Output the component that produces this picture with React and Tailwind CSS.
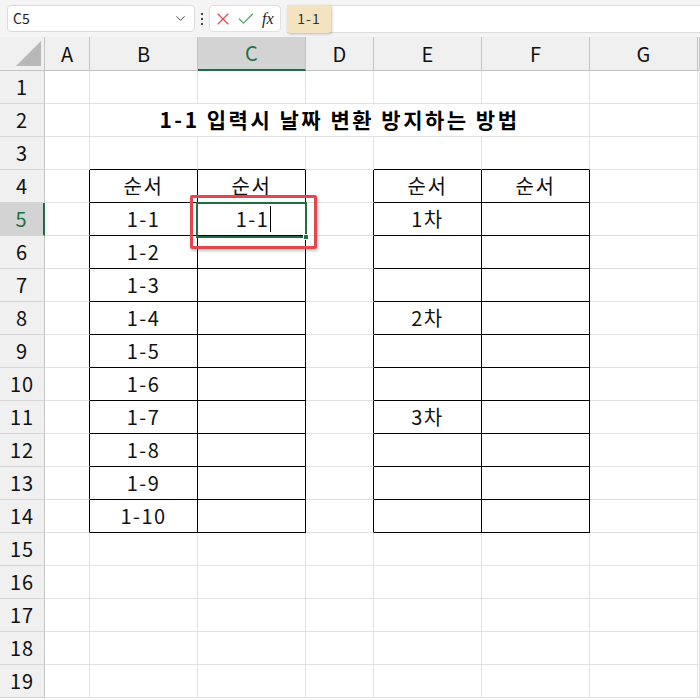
import { X, Check, ChevronDown } from 'lucide-react'

const COLS = ['A', 'B', 'C', 'D', 'E', 'F', 'G', 'H']
const ROWS = Array.from({ length: 19 }, (_, i) => i + 1)

// cell contents keyed "C:row"
const DATA = {
  'B4': '순서', 'C4': '순서', 'E4': '순서', 'F4': '순서',
  'B5': '1-1', 'E5': '1차',
  'B6': '1-2', 'B7': '1-3', 'B8': '1-4', 'B9': '1-5', 'B10': '1-6',
  'B11': '1-7', 'B12': '1-8', 'B13': '1-9', 'B14': '1-10',
  'E8': '2차', 'E11': '3차',
}

const inTable = (c, r) => r >= 4 && r <= 14 && ['B', 'C', 'E', 'F'].includes(c)

function Cell({ c, r }) {
  const t = inTable(c, r)
  // right border black inside tables, and on the cell just left of a table
  const rightBlack = t || (r >= 4 && r <= 14 && (c === 'A' || c === 'D'))
  const bottomBlack = t || (r === 3 && ['B', 'C', 'E', 'F'].includes(c))
  const txt = DATA[c + r]
  return (
    <div
      className={
        'border-r border-b flex items-center justify-center text-[20px] tracking-[1.5px] text-[#111] ' +
        (rightBlack ? 'border-r-black ' : 'border-r-[#e2e2e2] ') +
        (bottomBlack ? 'border-b-black' : 'border-b-[#e2e2e2]')
      }
    >
      {c === 'C' && r === 5 ? (
        <span className="flex items-center pl-[4px]">
          1-1<span className="ml-[1px] w-px h-[26px] bg-black" />
        </span>
      ) : txt}
    </div>
  )
}

export default function App() {
  return (
    <div
      className="w-[700px] h-[700px] overflow-hidden bg-white"
      style={{ fontFamily: '"Noto Sans CJK KR", "Noto Sans", sans-serif' }}
    >
      {/* formula bar */}
      <div className="h-[37px] bg-[#f4f4f4] flex items-center">
        <div className="ml-[7px] w-[188px] h-[27px] bg-white border border-[#dadada] rounded-[4px] flex items-center justify-between pl-[5px] pr-[6px] text-[14px] text-[#222]">
          <span>C5</span>
          <ChevronDown size={15} strokeWidth={1.6} className="text-[#444]" />
        </div>
        <div className="w-[14px] flex flex-col items-center gap-[3px]">
          <span className="w-[2px] h-[2px] bg-[#444]" />
          <span className="w-[2px] h-[2px] bg-[#444]" />
          <span className="w-[2px] h-[2px] bg-[#444]" />
        </div>
        <div className="w-[72px] h-[27px] bg-white border border-[#e0e0e0] rounded-[4px] flex items-center pl-[3px] gap-[3px]">
          <X size={20} strokeWidth={1.4} className="text-[#e0484c]" />
          <Check size={20} strokeWidth={1.4} className="text-[#4ca25a]" />
          <span className="ml-[3px] text-[16px] italic text-[#222]" style={{ fontFamily: '"Liberation Serif", serif' }}>fx</span>
        </div>
        <div className="ml-[6px] flex-1 h-[28px] bg-white border-y border-[#dcdcdc] flex items-center">
          <div className="w-[44px] h-[28px] bg-[#f3e3c0] rounded-[3px] shadow-[1px_1px_3px_rgba(0,0,0,0.25)] flex items-center justify-center text-[14px] tracking-[1px] text-[#333]">
            1-1
          </div>
        </div>
      </div>

      {/* sheet */}
      <div className="relative grid grid-cols-[45px_45px_108px_108px_68px_108px_108px_108px_1fr] grid-rows-[34px_repeat(19,33px)]">
        {/* corner */}
        <div className="bg-[#f0f0f0] border-r border-b border-[#c4c4c4] relative">
          <div
            className="absolute right-[3px] bottom-[4px] w-[25px] h-[25px] bg-[#b8b8b8]"
            style={{ clipPath: 'polygon(100% 0, 100% 100%, 0 100%)' }}
          />
        </div>
        {COLS.map(c => (
          <div
            key={c}
            className={
              'flex items-center justify-center text-[20px] border-r ' +
              (c === 'C'
                ? 'bg-[#d3d3d3] text-[#1e6e43] border-b-2 border-b-[#1e6e43] border-r-[#c4c4c4]'
                : 'bg-[#f0f0f0] text-[#111] border-b border-[#c4c4c4]')
            }
          >
            {c === 'H' ? '' : c}
          </div>
        ))}

        {ROWS.map(r => (
          <>
            <div
              key={'h' + r}
              className={
                'flex items-center justify-center text-[20px] tracking-[1px] border-b border-b-[#d4d4d4] ' +
                (r === 5
                  ? 'bg-[#d3d3d3] text-[#1e6e43] border-r-2 border-r-[#1e6e43]'
                  : 'bg-[#f0f0f0] text-[#111] border-r border-r-[#c4c4c4]')
              }
            >
              {r}
            </div>
            {r === 2 ? (
              <>
                <Cell key="A2" c="A" r={2} />
                <div className="col-span-5 border-r border-b border-[#e2e2e2] flex items-center justify-center text-[21px] tracking-[2.5px] font-bold text-black">
                  1-1 입력시 날짜 변환 방지하는 방법
                </div>
                <Cell key="G2" c="G" r={2} />
                <Cell key="H2" c="H" r={2} />
              </>
            ) : (
              COLS.map(c => <Cell key={c + r} c={c} r={r} />)
            )}
          </>
        ))}

        {/* selection on C5 */}
        <div className="absolute left-[196px] top-[165px] w-[111px] h-[36px] border-2 border-[#1e6e43] pointer-events-none">
          <div className="absolute right-[-4px] bottom-[-4px] w-[6px] h-[6px] bg-[#1e6e43] border border-white" />
        </div>
        {/* red highlight box */}
        <div className="absolute left-[190px] top-[158px] w-[127px] h-[54px] border-[3px] border-[#e2474d] rounded-[2px] shadow-[1px_2px_3px_rgba(0,0,0,0.25)] pointer-events-none" />
      </div>
    </div>
  )
}
